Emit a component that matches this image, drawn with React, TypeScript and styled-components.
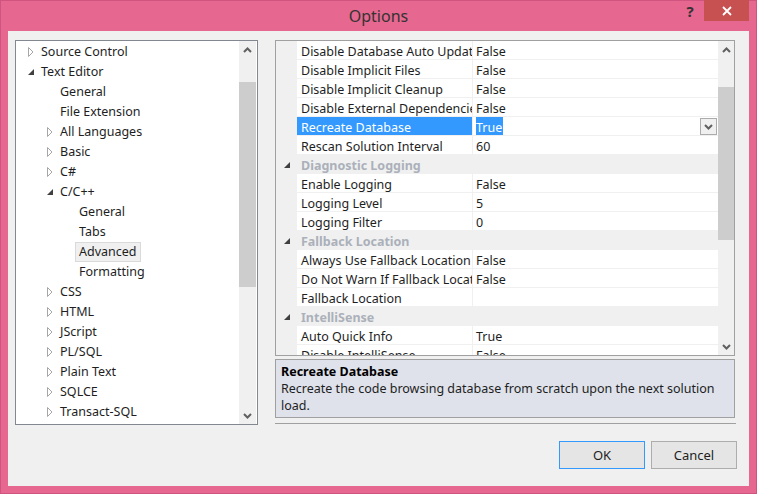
import * as React from "react"
import styled, { createGlobalStyle } from "styled-components"

const GlobalStyle = createGlobalStyle`
  html, body {
    margin: 0;
    padding: 0;
    background: #e6678f;
  }
  * {
    box-sizing: border-box;
  }
`

const UI_FONT = `"Noto Sans", "Liberation Sans", sans-serif`

const Window = styled.div`
  width: 757px;
  height: 494px;
  background: #e6678f;
  border: 1px solid #cf5580;
  padding: 0 7px 7px 7px;
  display: flex;
  flex-direction: column;
  font-family: ${UI_FONT};
  font-size: 12.5px;
  color: #1e1e1e;
`

const TitleBar = styled.div`
  height: 30px;
  display: grid;
  grid-template-columns: 1fr auto 1fr;
  align-items: start;
`

const Title = styled.div`
  grid-column: 2;
  font-size: 16px;
  line-height: 30px;
  color: #333333;
`

const Controls = styled.div`
  grid-column: 3;
  justify-self: end;
  display: flex;
  margin-top: -1px;
`

const HelpButton = styled.div`
  width: 28px;
  height: 20px;
  font-size: 15px;
  font-weight: bold;
  line-height: 22px;
  text-align: center;
  color: #333;
`

const CloseButton = styled.div`
  width: 45px;
  height: 21px;
  background: #c75050;
  display: flex;
  align-items: center;
  justify-content: center;
`

const Client = styled.div`
  flex: 1;
  background: #f0f0f0;
  padding: 9px 12px 0 7px;
  display: flex;
  flex-direction: column;
`

const Main = styled.div`
  display: flex;
  gap: 17px;
  height: 385px;
`

const TreeBox = styled.div`
  width: 243px;
  height: 385px;
  border: 1px solid #828790;
  background: #ffffff;
  display: flex;
  padding-right: 1px;
`

const TreeList = styled.div`
  flex: 1;
  overflow: hidden;
  padding-top: 1px;
`

const TreeRow = styled.div<{ $level: number }>`
  height: 20px;
  display: flex;
  align-items: center;
  padding-left: ${(p) => 12 + p.$level * 19}px;
  white-space: nowrap;
`

const Expander = styled.span`
  width: 13px;
  height: 20px;
  display: flex;
  align-items: center;
  flex: none;
`

const TreeLabel = styled.span<{ $selected?: boolean }>`
  line-height: 18px;
  padding: 0 3px;
  margin-left: -4px;
  border: 1px solid ${(p) => (p.$selected ? "#dadada" : "transparent")};
  background: ${(p) => (p.$selected ? "#f0f0f0" : "transparent")};
`

const Scrollbar = styled.div<{ $width: number }>`
  width: ${(p) => p.$width}px;
  flex: none;
  background: #f0f0f0;
  display: flex;
  flex-direction: column;
`

const ArrowCell = styled.div`
  height: 17px;
  flex: none;
  display: flex;
  align-items: center;
  justify-content: center;
`

const Track = styled.div`
  flex: 1;
`

const Thumb = styled.div<{ $top: number; $height: number }>`
  margin-top: ${(p) => p.$top}px;
  height: ${(p) => p.$height}px;
  background: #cdcdcd;
`

const RightCol = styled.div`
  width: 460px;
  display: flex;
  flex-direction: column;
`

const GridBox = styled.div`
  height: 316px;
  border: 1px solid #a0a0a0;
  background: #ffffff;
  display: flex;
`

const GridBody = styled.div`
  width: 442px;
  flex: none;
  overflow: hidden;
  background: linear-gradient(to right, #f0f0f0 21px, #ffffff 21px);
`

const PropRow = styled.div`
  height: 19px;
  display: grid;
  grid-template-columns: 21px 176px 1fr;
`

const NameCell = styled.div<{ $selected?: boolean }>`
  height: 18px;
  line-height: 21px;
  padding-left: 4px;
  border-right: 1px solid #f0f0f0;
  border-bottom: 1px solid #f0f0f0;
  box-sizing: content-box;
  width: 171px;
  white-space: nowrap;
  overflow: hidden;
  background: ${(p) => (p.$selected ? "#3399ff" : "#ffffff")};
  color: ${(p) => (p.$selected ? "#ffffff" : "#1e1e1e")};
`

const ValueCell = styled.div`
  height: 19px;
  line-height: 21px;
  padding-left: 3px;
  border-bottom: 1px solid #f0f0f0;
  display: flex;
  align-items: flex-start;
  white-space: nowrap;
  overflow: hidden;
`

const SelectedValue = styled.span`
  background: #3399ff;
  color: #ffffff;
  line-height: 18px;
  padding: 2px 1px 0 0;
  height: 18px;
`

const DropButton = styled.div`
  margin-left: auto;
  margin-right: 1px;
  margin-top: 1px;
  width: 17px;
  height: 17px;
  border: 1px solid #acacac;
  background: #f0f0f0;
  display: flex;
  align-items: center;
  justify-content: center;
`

const CategoryRow = styled.div`
  height: 19px;
  background: #f0f0f0;
  display: grid;
  grid-template-columns: 21px 1fr;
  align-items: center;
`

const CategoryIcon = styled.span`
  display: flex;
  justify-content: center;
  padding-left: 1px;
  padding-top: 1px;
`

const CategoryLabel = styled.span`
  font-weight: bold;
  color: #abb0ba;
  padding-left: 4px;
  line-height: 21px;
  height: 19px;
`

const Description = styled.div`
  margin-top: 3px;
  height: 59px;
  border: 1px solid #a0a0a0;
  background: #dfe2ea;
  padding: 3px 4px 0 5px;
  line-height: 17px;
`

const DescTitle = styled.div`
  font-weight: bold;
  color: #000;
`

const DescText = styled.div`
  color: #1e1e1e;
`

const Separator = styled.div`
  margin-top: 5px;
  height: 1px;
  background: #a0a0a0;
  width: 461px;
`

const Footer = styled.div`
  margin-top: 16px;
  display: flex;
  justify-content: flex-end;
  gap: 6px;
`

const Button = styled.div<{ $default?: boolean }>`
  width: 86px;
  height: 28px;
  border: 1px solid ${(p) => (p.$default ? "#3399ff" : "#adadad")};
  background: #e5e5e5;
  display: flex;
  align-items: center;
  justify-content: center;
  font-size: 13px;
  color: #1e1e1e;
`

const Collapsed = () => (
  <svg width="6" height="10" viewBox="0 0 6 10">
    <path d="M0.5 0.5 L5 5 L0.5 9.5 Z" fill="none" stroke="#a6a6a6" strokeWidth="1" />
  </svg>
)

const Expanded = () => (
  <svg width="6" height="6" viewBox="0 0 6 6">
    <path d="M6 0 L6 6 L0 6 Z" fill="#404040" />
  </svg>
)

const Chevron = ({ up }: { up?: boolean }) => (
  <svg width="9" height="6" viewBox="0 0 9 6">
    <path
      d={up ? "M1 5 L4.5 1.5 L8 5" : "M1 1 L4.5 4.5 L8 1"}
      fill="none"
      stroke="#606060"
      strokeWidth="2"
    />
  </svg>
)

type TreeItem = { label: string; level: number; state?: "open" | "closed"; selected?: boolean }

const treeItems: TreeItem[] = [
  { label: "Source Control", level: 0, state: "closed" },
  { label: "Text Editor", level: 0, state: "open" },
  { label: "General", level: 1 },
  { label: "File Extension", level: 1 },
  { label: "All Languages", level: 1, state: "closed" },
  { label: "Basic", level: 1, state: "closed" },
  { label: "C#", level: 1, state: "closed" },
  { label: "C/C++", level: 1, state: "open" },
  { label: "General", level: 2 },
  { label: "Tabs", level: 2 },
  { label: "Advanced", level: 2, selected: true },
  { label: "Formatting", level: 2 },
  { label: "CSS", level: 1, state: "closed" },
  { label: "HTML", level: 1, state: "closed" },
  { label: "JScript", level: 1, state: "closed" },
  { label: "PL/SQL", level: 1, state: "closed" },
  { label: "Plain Text", level: 1, state: "closed" },
  { label: "SQLCE", level: 1, state: "closed" },
  { label: "Transact-SQL", level: 1, state: "closed" },
]

type GridItem =
  | { kind: "cat"; label: string }
  | { kind: "prop"; name: string; value: string; selected?: boolean }

const gridItems: GridItem[] = [
  { kind: "prop", name: "Disable Database Auto Update", value: "False" },
  { kind: "prop", name: "Disable Implicit Files", value: "False" },
  { kind: "prop", name: "Disable Implicit Cleanup", value: "False" },
  { kind: "prop", name: "Disable External Dependencies Folders", value: "False" },
  { kind: "prop", name: "Recreate Database", value: "True", selected: true },
  { kind: "prop", name: "Rescan Solution Interval", value: "60" },
  { kind: "cat", label: "Diagnostic Logging" },
  { kind: "prop", name: "Enable Logging", value: "False" },
  { kind: "prop", name: "Logging Level", value: "5" },
  { kind: "prop", name: "Logging Filter", value: "0" },
  { kind: "cat", label: "Fallback Location" },
  { kind: "prop", name: "Always Use Fallback Location", value: "False" },
  { kind: "prop", name: "Do Not Warn If Fallback Location", value: "False" },
  { kind: "prop", name: "Fallback Location", value: "" },
  { kind: "cat", label: "IntelliSense" },
  { kind: "prop", name: "Auto Quick Info", value: "True" },
  { kind: "prop", name: "Disable IntelliSense", value: "False" },
]

export default function App() {
  return (
    <>
      <GlobalStyle />
      <Window>
        <TitleBar>
          <Title>Options</Title>
          <Controls>
            <HelpButton>?</HelpButton>
            <CloseButton>
              <svg width="10" height="10" viewBox="0 0 10 10">
                <path d="M1 1 L9 9 M9 1 L1 9" stroke="#ffffff" strokeWidth="1.8" />
              </svg>
            </CloseButton>
          </Controls>
        </TitleBar>
        <Client>
          <Main>
            <TreeBox>
              <TreeList>
                {treeItems.map((item, i) => (
                  <TreeRow key={i} $level={item.level}>
                    <Expander>
                      {item.state === "closed" && <Collapsed />}
                      {item.state === "open" && <Expanded />}
                    </Expander>
                    <TreeLabel $selected={item.selected}>{item.label}</TreeLabel>
                  </TreeRow>
                ))}
              </TreeList>
              <Scrollbar $width={17}>
                <ArrowCell>
                  <Chevron up />
                </ArrowCell>
                <Track>
                  <Thumb $top={24} $height={205} />
                </Track>
                <ArrowCell>
                  <Chevron />
                </ArrowCell>
              </Scrollbar>
            </TreeBox>
            <RightCol>
              <GridBox>
                <GridBody>
                  {gridItems.map((item, i) =>
                    item.kind === "cat" ? (
                      <CategoryRow key={i}>
                        <CategoryIcon>
                          <Expanded />
                        </CategoryIcon>
                        <CategoryLabel>{item.label}</CategoryLabel>
                      </CategoryRow>
                    ) : (
                      <PropRow key={i}>
                        <span />
                        <NameCell $selected={item.selected}>{item.name}</NameCell>
                        <ValueCell>
                          {item.selected ? <SelectedValue>{item.value}</SelectedValue> : item.value}
                          {item.selected && (
                            <DropButton>
                              <Chevron />
                            </DropButton>
                          )}
                        </ValueCell>
                      </PropRow>
                    )
                  )}
                </GridBody>
                <Scrollbar $width={16}>
                  <ArrowCell>
                    <Chevron up />
                  </ArrowCell>
                  <Track>
                    <Thumb $top={29} $height={153} />
                  </Track>
                  <ArrowCell>
                    <Chevron />
                  </ArrowCell>
                </Scrollbar>
              </GridBox>
              <Description>
                <DescTitle>Recreate Database</DescTitle>
                <DescText>
                  Recreate the code browsing database from scratch upon the next solution load.
                </DescText>
              </Description>
              <Separator />
            </RightCol>
          </Main>
          <Footer>
            <Button $default>OK</Button>
            <Button>Cancel</Button>
          </Footer>
        </Client>
      </Window>
    </>
  )
}
